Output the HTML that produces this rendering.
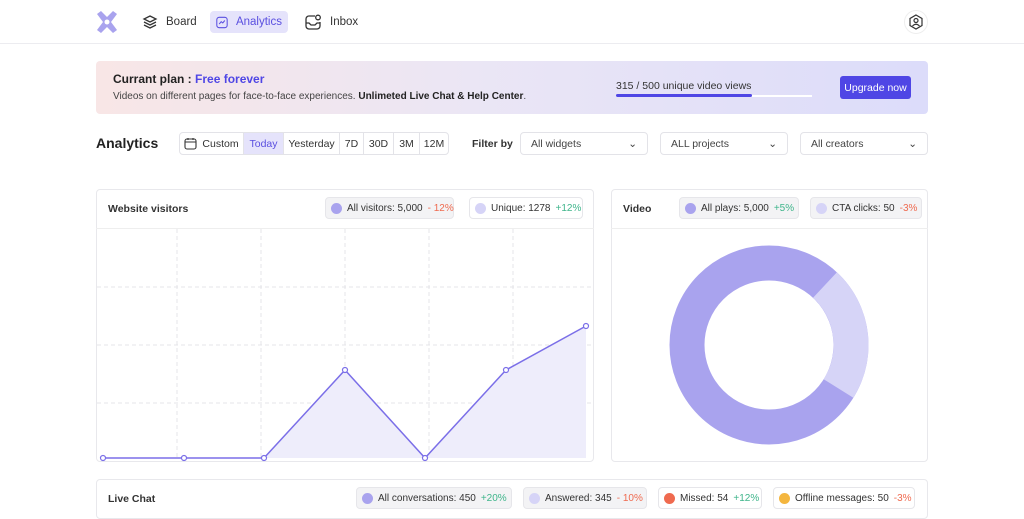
<!DOCTYPE html>
<html><head><meta charset="utf-8"><style>
*{box-sizing:border-box;margin:0;padding:0}
body{width:1024px;height:501px;overflow:hidden;background:#fff;font-family:"Liberation Sans",sans-serif;color:#222;font-size:11px;position:relative}
.abs{position:absolute}
.nav{top:0;left:0;width:1024px;height:44px;border-bottom:1px solid #ececf0}
.navitem{display:flex;align-items:center;gap:8px;font-size:11.5px;color:#333;height:22px}
.banner{left:96px;top:61px;width:832px;height:53px;border-radius:4px;background:linear-gradient(90deg,#f8e6e6 0%,#ebe6f5 45%,#dcdcfa 100%)}
.seg{display:flex;border:1px solid #e3e3e8;border-radius:4px;height:23px;left:179px;top:132px}
.seg div{display:flex;align-items:center;justify-content:center;border-right:1px solid #e3e3e8;font-size:10.5px;color:#333}
.seg div:last-child{border-right:none}
.dd{height:23px;border:1px solid #e3e3e8;border-radius:4px;top:132px;display:flex;align-items:center;justify-content:space-between;padding:0 10px;font-size:10.5px;color:#444}
.card{border:1px solid #e8e8ec;border-radius:4px}
.chip{height:22px;border:1px solid #e6e6ea;border-radius:4px;display:flex;align-items:center;padding:0 5px;gap:5px;font-size:10px;color:#333;background:#fff;white-space:nowrap}
.chip.g{background:#f3f3f5}
.dot{width:11px;height:11px;border-radius:50%;flex-shrink:0}
.up{color:#3fb58b}.dn{color:#ef6a4f}
</style></head><body>
<div class="abs nav"></div>
<svg class="abs" style="left:95px;top:10px" width="25" height="24" viewBox="0 0 25 24">
<g fill="#a9a3ee"><path d="M2 4 L6 1 L12 7 L18 1 L22 4 L16 12 L22 20 L18 23 L12 17 L6 23 L2 20 L8 12Z"/></g>
<circle cx="12" cy="12" r="2.5" fill="#fff"/></svg>
<div class="abs navitem" style="left:142px;top:11px">
<svg width="16" height="16" viewBox="0 0 16 16" fill="none" stroke="#333" stroke-width="1.3"><path d="M8 2 L14 5 L8 8 L2 5Z"/><path d="M2 8 L8 11 L14 8"/><path d="M2 11 L8 14 L14 11"/></svg>Board</div>
<div class="abs navitem" style="left:210px;top:11px;background:#e5e3fb;border-radius:4px;padding:0 6px;color:#5a4fe0;width:78px">
<svg width="15" height="15" viewBox="0 0 15 15" fill="none" stroke="#5a4fe0" stroke-width="1.3"><rect x="1" y="1" width="13" height="13" rx="3"/><path d="M4 9.5 L6.5 6.5 L8.5 8 L11 5"/></svg>Analytics</div>
<div class="abs navitem" style="left:305px;top:11px">
<svg width="17" height="17" viewBox="0 0 17 17" fill="none" stroke="#333" stroke-width="1.3"><path d="M10 2 H4 a3 3 0 0 0 -3 3 V12 a3 3 0 0 0 3 3 H12 a3 3 0 0 0 3 -3 V8"/><path d="M1 9 H4 L6 11 H10 L12 9 H15"/><circle cx="13" cy="3.5" r="2.3"/></svg>Inbox</div>
<div class="abs" style="left:904px;top:10px;width:24px;height:24px;border-radius:50%;border:1px solid #eee;display:flex;align-items:center;justify-content:center">
<svg width="16" height="16" viewBox="0 0 16 16" fill="none" stroke="#333" stroke-width="1.2"><path d="M8 1 L14 4.5 V11.5 L8 15 L2 11.5 V4.5Z"/><circle cx="8" cy="6.5" r="2"/><path d="M4.5 12 Q8 8.5 11.5 12"/></svg></div>

<div class="abs banner"></div>
<div class="abs" style="left:113px;top:72px;font-size:12px;font-weight:bold;color:#222">Currant plan : <span style="color:#4f46e5">Free forever</span></div>
<div class="abs" style="left:113px;top:91px;font-size:10px;color:#444">Videos on different pages for face-to-face experiences. <b style="color:#222">Unlimeted Live Chat &amp; Help Center</b>.</div>
<div class="abs" style="left:616px;top:80px;font-size:10.5px;color:#333">315 / 500 unique video views</div>
<div class="abs" style="left:616px;top:95px;width:196px;height:2px;background:#fff"></div>
<div class="abs" style="left:616px;top:94px;width:136px;height:3px;background:#4f46e5;border-radius:2px"></div>
<div class="abs" style="left:840px;top:76px;width:71px;height:23px;background:#4f46e5;border-radius:3px;color:#fff;font-size:10.5px;display:flex;align-items:center;justify-content:center">Upgrade now</div>

<div class="abs" style="left:96px;top:135px;font-size:14px;font-weight:bold;color:#222">Analytics</div>
<div class="abs seg">
<div style="gap:5px;width:64px"><svg width="13" height="13" viewBox="0 0 13 13" fill="none" stroke="#333" stroke-width="1.1"><rect x="1" y="2" width="11" height="10" rx="2"/><path d="M4 1V3M9 1V3M1 5H12"/></svg>Custom</div>
<div style="background:#e5e3fb;color:#5a4fe0;width:40px">Today</div><div style="width:56px">Yesterday</div><div style="width:24px">7D</div><div style="width:30px">30D</div><div style="width:26px">3M</div><div style="width:28px">12M</div></div>
<div class="abs" style="left:472px;top:138px;font-size:10.5px;font-weight:bold;color:#333">Filter by</div>
<div class="abs dd" style="left:520px;width:128px">All widgets<span>⌄</span></div>
<div class="abs dd" style="left:660px;width:128px">ALL projects<span>⌄</span></div>
<div class="abs dd" style="left:800px;width:128px">All creators<span>⌄</span></div>

<div class="abs card" style="left:96px;top:189px;width:498px;height:273px"></div>
<div class="abs" style="left:96px;top:228px;width:498px;height:1px;background:#eee"></div>
<div class="abs" style="left:108px;top:203px;font-size:10.5px;font-weight:bold;color:#333">Website visitors</div>
<div class="abs chip g" style="left:325px;top:197px;width:129px"><span class="dot" style="background:#a9a3ee"></span>All visitors: 5,000 <span class="dn">- 12%</span></div>
<div class="abs chip" style="left:469px;top:197px;width:114px"><span class="dot" style="background:#d6d4f7"></span>Unique: 1278 <span class="up">+12%</span></div>
<svg class="abs" style="left:0;top:0" width="600" height="470">
<g stroke="#e4e4e8" stroke-dasharray="4,3" stroke-width="1">
<path d="M177 229V460M261 229V460M345 229V460M429 229V460M513 229V460M97 287H593M97 345H593M97 403H593"/></g>
<path d="M103 458 L184 458 L264 458 L345 370 L425 458 L506 370 L586 326 L586 458Z" fill="#eeedfb"/>
<polyline points="103,458 184,458 264,458 345,370 425,458 506,370 586,326" fill="none" stroke="#7b6fe8" stroke-width="1.5"/>
<g fill="#fff" stroke="#7b6fe8" stroke-width="1.2">
<circle cx="103" cy="458" r="2.5"/><circle cx="184" cy="458" r="2.5"/><circle cx="264" cy="458" r="2.5"/><circle cx="345" cy="370" r="2.5"/><circle cx="425" cy="458" r="2.5"/><circle cx="506" cy="370" r="2.5"/><circle cx="586" cy="326" r="2.5"/></g>
</svg>

<div class="abs card" style="left:611px;top:189px;width:317px;height:273px"></div>
<div class="abs" style="left:611px;top:228px;width:317px;height:1px;background:#eee"></div>
<div class="abs" style="left:623px;top:203px;font-size:10.5px;font-weight:bold;color:#333">Video</div>
<div class="abs chip g" style="left:679px;top:197px;width:120px"><span class="dot" style="background:#a9a3ee"></span>All plays: 5,000 <span class="up">+5%</span></div>
<div class="abs chip g" style="left:810px;top:197px;width:112px"><span class="dot" style="background:#d6d4f7"></span>CTA clicks: 50 <span class="dn">-3%</span></div>
<svg class="abs" style="left:669px;top:245px" width="200" height="200" viewBox="-100 -100 200 200">
<circle r="82" fill="none" stroke="#a9a3ee" stroke-width="35"/>
<path d="M56 -60 A82 82 0 0 1 69.5 43.5" fill="none" stroke="#d6d4f7" stroke-width="35"/>
</svg>

<div class="abs card" style="left:96px;top:479px;width:832px;height:40px"></div>
<div class="abs" style="left:108px;top:493px;font-size:10.5px;font-weight:bold;color:#333">Live Chat</div>
<div class="abs chip g" style="left:356px;top:487px;width:156px"><span class="dot" style="background:#a9a3ee"></span>All conversations: 450 <span class="up">+20%</span></div>
<div class="abs chip g" style="left:523px;top:487px;width:124px"><span class="dot" style="background:#d6d4f7"></span>Answered: 345 <span class="dn">- 10%</span></div>
<div class="abs chip" style="left:658px;top:487px;width:104px"><span class="dot" style="background:#ef6a4f"></span>Missed: 54 <span class="up">+12%</span></div>
<div class="abs chip" style="left:773px;top:487px;width:142px"><span class="dot" style="background:#f4b63f"></span>Offline messages: 50 <span class="dn">-3%</span></div>
</body></html>
